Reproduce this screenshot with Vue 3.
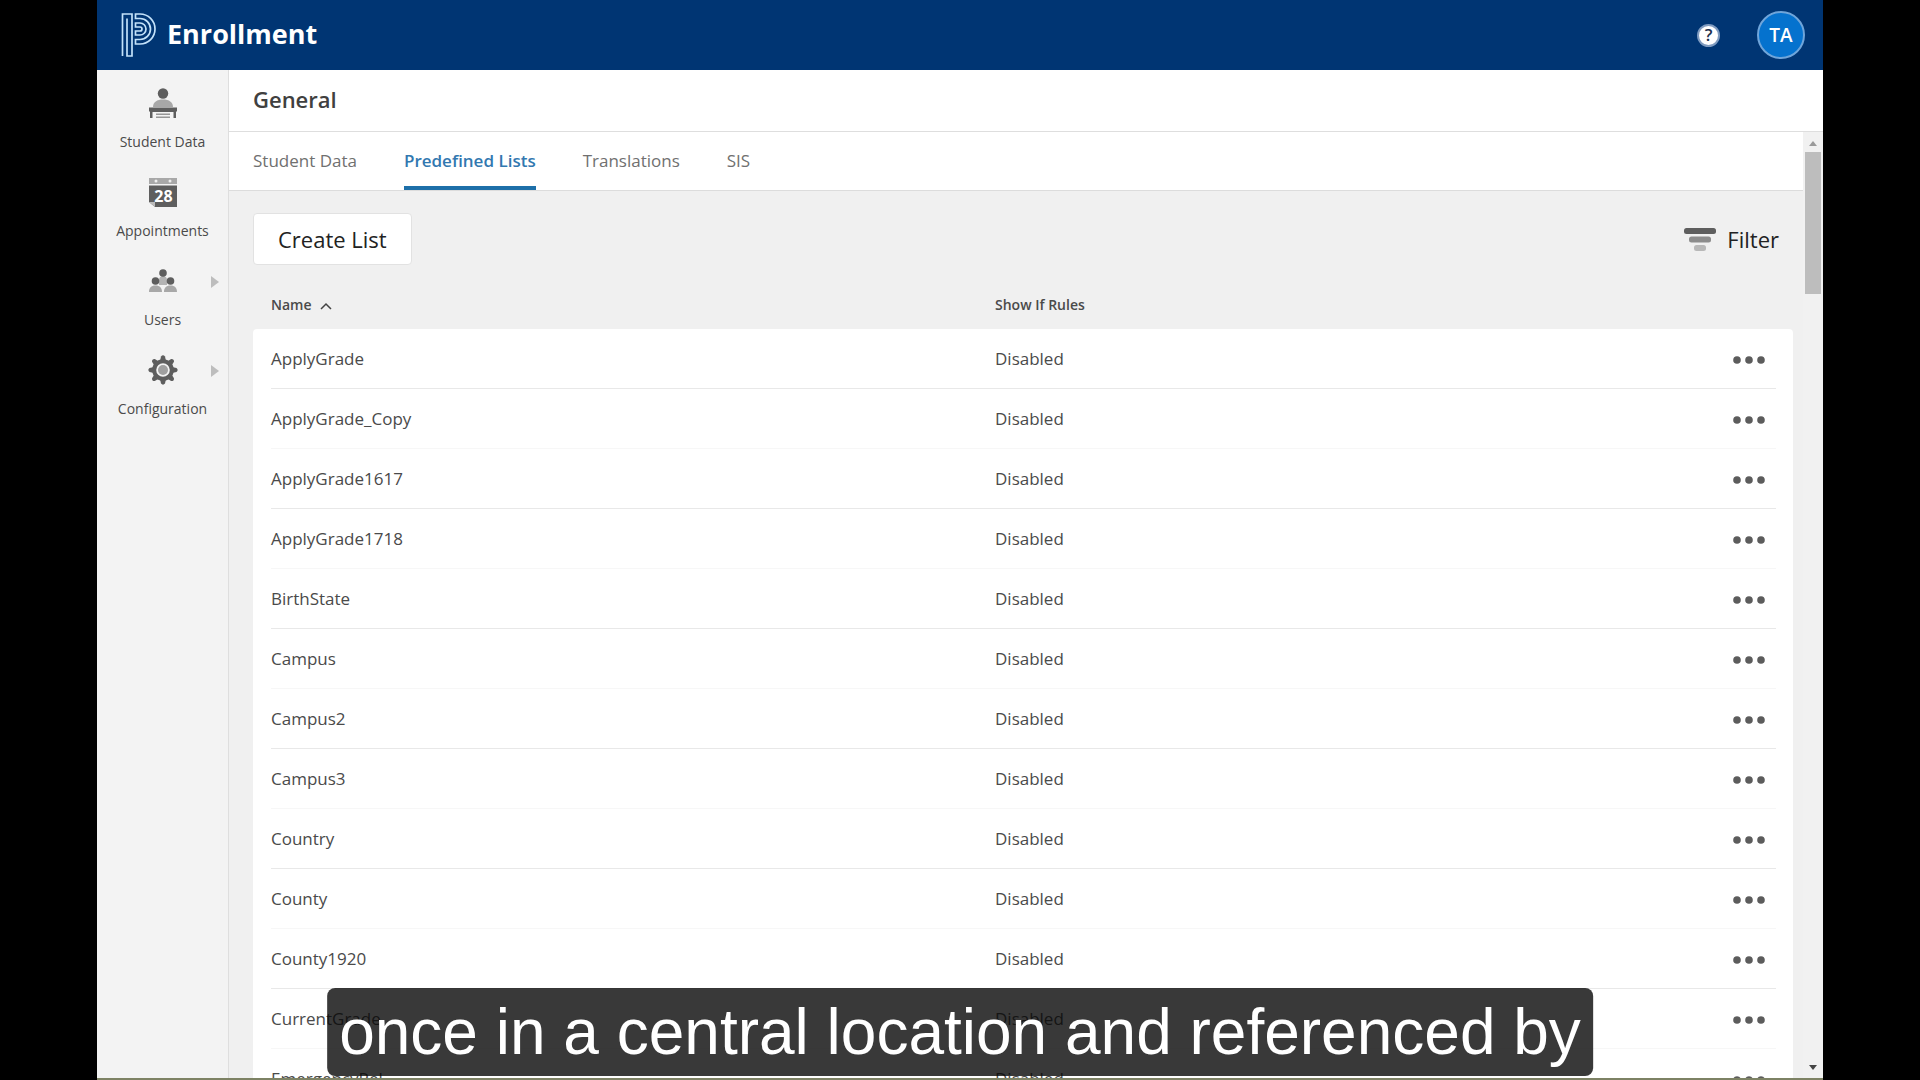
<template>
  <div class="stage">
    <div class="app">
      <header class="topbar">
        <a class="brand" href="#">
          <svg class="logo" viewBox="0 0 36 44" aria-hidden="true">
            <path d="M1.500 43V1H11V43H6V5.500" />
            <path d="M14.500 1H19a15 15 0 0 1 0 30h-4.500v-4.500H19a10.500 10.500 0 0 0 0-21h-4.500z" />
            <path d="M14.500 10H19a6 6 0 0 1 0 12h-4.500v-4H19a2 2 0 0 0 0-4h-4.500z" />
          </svg>
          <span>Enrollment</span>
        </a>
        <div class="topbar-right">
          <button class="help" aria-label="Help">?</button>
          <button class="avatar">TA</button>
        </div>
      </header>

      <div class="body">
        <nav class="sidebar">
          <a v-for="item in navItems" :key="item.label" class="nav-item" href="#">
            <svg v-if="item.icon === 'student'" class="nav-icon" viewBox="0 0 30 30" aria-hidden="true">
              <circle cx="15" cy="5.500" r="5.200" fill="#5e5e5e" />
              <path d="M5 19c0-5 4-7.500 10-7.500s10 2.500 10 7.500z" fill="#a8a8a8" />
              <path d="M1 19.500h28v4h-1V30h-2.500v-6h-21v6H2v-6.500H1z" fill="#5e5e5e" />
              <path d="M8 25.500h14V27H8zM8 28.500h14V30H8z" fill="#969696" />
            </svg>
            <svg v-else-if="item.icon === 'calendar'" class="nav-icon" viewBox="0 0 30 30" aria-hidden="true">
              <path d="M1 1h28v6H1z" fill="#a8a8a8" />
              <circle cx="8" cy="4" r="1.500" fill="#eee" />
              <circle cx="22" cy="4" r="1.500" fill="#eee" />
              <path d="M1 8.500h28V30H7l-6-5z" fill="#5e5e5e" />
              <path d="M1 25h6v5z" fill="#bcbcbc" />
              <text x="15.500" y="25" text-anchor="middle" class="cal-day">28</text>
            </svg>
            <svg v-else-if="item.icon === 'users'" class="nav-icon" viewBox="0 0 30 30" aria-hidden="true">
              <path d="M11 19v-5c0-3 2-4 4-4s4 1 4 4v5z" fill="#b4b4b4" />
              <circle cx="15" cy="7" r="3.800" fill="#5e5e5e" />
              <circle cx="7.500" cy="15" r="3.800" fill="#5e5e5e" />
              <circle cx="22.500" cy="15" r="3.800" fill="#5e5e5e" />
              <path d="M1 26c0-4 2-6.500 6.500-6.500S14 22 14 26zM16 26c0-4 2-6.500 6.500-6.500S29 22 29 26z" fill="#a8a8a8" />
            </svg>
            <svg v-else class="nav-icon" viewBox="0 0 30 30" aria-hidden="true">
              <path
                v-for="n in 8"
                :key="n"
                d="M12 6 13 1.500Q15-.8 17 1.500L18 6z"
                fill="#5e5e5e"
                :transform="`rotate(${n * 45} 15 15)`"
              />
              <circle cx="15" cy="15" r="8.800" fill="none" stroke="#5e5e5e" stroke-width="4" />
              <circle cx="15" cy="15" r="5" fill="#a0a0a0" />
            </svg>
            <span>{{ item.label }}</span>
            <svg v-if="item.children" class="nav-arrow" viewBox="0 0 8 12" aria-hidden="true">
              <path d="M0 0l8 6-8 6z" fill="#bdbdbd" />
            </svg>
          </a>
        </nav>

        <main class="main">
          <h1 class="page-title">General</h1>
          <div class="scroll-area">
            <div class="content">
              <nav class="tabs">
                <a v-for="tab in tabs" :key="tab" href="#" :class="['tab', { active: tab === activeTab }]" @click.prevent="activeTab = tab">{{ tab }}</a>
              </nav>

              <div class="toolbar">
                <button class="create-btn">Create List</button>
                <button class="filter-btn">
                  <svg class="filter-icon" viewBox="0 0 32 24" aria-hidden="true">
                    <rect x="0" y="1" width="32" height="6" rx="2.500" fill="#5e5e5e" />
                    <rect x="5" y="9.500" width="22" height="6" rx="2.500" fill="#8c8c8c" />
                    <rect x="10" y="18" width="12" height="6" rx="2.500" fill="#b8b8b8" />
                  </svg>
                  Filter
                </button>
              </div>

              <table class="list-table">
                <thead>
                  <tr>
                    <th class="col-name">
                      Name
                      <svg class="sort-icon" viewBox="0 0 12 8" aria-hidden="true">
                        <path d="M1 7l5-5 5 5" fill="none" stroke="#444" stroke-width="1.500" />
                      </svg>
                    </th>
                    <th>Show If Rules</th>
                    <th class="col-action"></th>
                  </tr>
                </thead>
                <tbody>
                  <tr v-for="name in lists" :key="name">
                    <td>{{ name }}</td>
                    <td>Disabled</td>
                    <td class="col-action">
                      <button class="more-btn" :aria-label="`Actions for ${name}`">
                        <svg viewBox="0 0 32 8" aria-hidden="true">
                          <circle cx="4" cy="4" r="3.800" />
                          <circle cx="16" cy="4" r="3.800" />
                          <circle cx="28" cy="4" r="3.800" />
                        </svg>
                      </button>
                    </td>
                  </tr>
                </tbody>
              </table>
            </div>

            <div class="scrollbar">
              <svg class="scroll-arrow" viewBox="0 0 8 5" aria-hidden="true"><path d="M0 5l4-5 4 5z" fill="#9a9a9a" /></svg>
              <div class="scroll-track"><div class="scroll-thumb"></div></div>
              <svg class="scroll-arrow" viewBox="0 0 8 5" aria-hidden="true"><path d="M0 0h8l-4 5z" fill="#444" /></svg>
            </div>
          </div>
        </main>
      </div>
    </div>
    <p class="caption">once in a central location and referenced by</p>
  </div>
</template>

<script setup>
import { ref } from 'vue';

const navItems = [
  { label: 'Student Data', icon: 'student' },
  { label: 'Appointments', icon: 'calendar' },
  { label: 'Users', icon: 'users', children: true },
  { label: 'Configuration', icon: 'gear', children: true }
];

const tabs = ['Student Data', 'Predefined Lists', 'Translations', 'SIS'];
const activeTab = ref('Predefined Lists');

const lists = [
  'ApplyGrade',
  'ApplyGrade_Copy',
  'ApplyGrade1617',
  'ApplyGrade1718',
  'BirthState',
  'Campus',
  'Campus2',
  'Campus3',
  'Country',
  'County',
  'County1920',
  'CurrentGrade',
  'EmergencyRel'
];
</script>

<style>
body {
  margin: 0;
  background: #000;
}
</style>

<style scoped>
.stage {
  position: relative;
  height: 100vh;
  box-sizing: border-box;
  padding: 0 97px;
  background: #000;
  overflow: hidden;
  font-family: "Open Sans", "Noto Sans", sans-serif;
  color: #4a4a4a;
}

.app {
  display: flex;
  flex-direction: column;
  height: 100%;
  box-sizing: border-box;
  border-bottom: 2px solid #7d8264;
  background: #f0f0f0;
}

button {
  border: none;
  padding: 0;
  font-family: inherit;
  cursor: pointer;
}

a {
  color: inherit;
  text-decoration: none;
}

/* 顶部栏 */
.topbar {
  display: flex;
  flex: none;
  justify-content: space-between;
  align-items: center;
  height: 70px;
  box-sizing: border-box;
  padding: 0 18px 0 24px;
  background: #003573;
  color: #fff;
}

.brand {
  display: flex;
  align-items: center;
  gap: 10px;
  font-size: 27px;
  line-height: 36px;
  font-weight: 700;
}

.brand span {
  padding-bottom: 2px;
}

.logo {
  width: 36px;
  height: 44px;
  fill: none;
  stroke: #c3e2fa;
  stroke-width: 1.7;
}

.topbar-right {
  display: flex;
  align-items: center;
  gap: 37px;
}

.help {
  width: 23px;
  height: 23px;
  border: 2px solid #7f9bc0;
  border-radius: 50%;
  background: #fff;
  color: #1c2f4d;
  font-size: 17px;
  line-height: 18px;
  font-weight: 600;
}

.avatar {
  width: 48px;
  height: 48px;
  border: 2px solid #6fa5da;
  border-radius: 50%;
  background: #0572ce;
  color: #fff;
  font-size: 19px;
  line-height: 42px;
  font-weight: 600;
}

.body {
  display: flex;
  flex: 1;
  min-height: 0;
}

/* 侧边栏 */
.sidebar {
  flex: none;
  width: 132px;
  box-sizing: border-box;
  padding-top: 18px;
  border-right: 1px solid #dedede;
  background: #f3f3f3;
}

.nav-item {
  position: relative;
  display: flex;
  flex-direction: column;
  align-items: center;
  gap: 14px;
  height: 89px;
  font-size: 14px;
  line-height: 20px;
}

.nav-icon {
  width: 30px;
  height: 30px;
}

.cal-day {
  font-size: 16px;
  font-weight: 700;
  fill: #fff;
}

.nav-arrow {
  position: absolute;
  right: 9px;
  top: 10px;
  width: 8px;
  height: 12px;
}

/* 主区域 */
.main {
  display: flex;
  flex: 1;
  flex-direction: column;
  min-width: 0;
}

.page-title {
  flex: none;
  height: 62px;
  box-sizing: border-box;
  margin: 0;
  padding-left: 24px;
  border-bottom: 1px solid #dedede;
  background: #fff;
  color: #404040;
  font-size: 22px;
  line-height: 58px;
  font-weight: 600;
}

.scroll-area {
  display: flex;
  flex: 1;
  min-height: 0;
}

.content {
  flex: 1;
  min-width: 0;
  overflow: hidden;
}

.tabs {
  display: flex;
  gap: 47px;
  height: 59px;
  box-sizing: border-box;
  padding-left: 24px;
  border-bottom: 1px solid #dcdcdc;
  background: #fff;
  color: #707070;
  font-size: 17px;
  line-height: 58px;
}

.tab.active {
  box-shadow: inset 0 -4px #1d6fa9;
  color: #3278b0;
  font-weight: 600;
}

.toolbar {
  display: flex;
  justify-content: space-between;
  align-items: center;
  padding: 22px 24px 0 24px;
}

.create-btn {
  height: 52px;
  padding: 0 24px;
  border: 1px solid #e2e2e2;
  border-radius: 4px;
  background: #fff;
  color: #222;
  font-size: 22px;
  line-height: 48px;
}

.filter-btn {
  display: flex;
  align-items: center;
  gap: 11px;
  background: none;
  color: #222;
  font-size: 22px;
}

.filter-icon {
  width: 32px;
  height: 24px;
}

/* 列表 */
.list-table {
  width: calc(100% - 34px);
  margin: 0 10px 0 24px;
  border-collapse: separate;
  border-spacing: 0;
  table-layout: fixed;
  font-size: 17px;
}

th {
  height: 64px;
  padding: 14px 0 0;
  box-sizing: border-box;
  font-size: 14px;
  font-weight: 600;
  text-align: left;
}

.col-name {
  box-sizing: border-box;
  width: 742px;
}

.sort-icon {
  width: 12px;
  height: 8px;
  margin-left: 5px;
}

td {
  height: 60px;
  padding: 0 0 2px;
  box-sizing: border-box;
  background: #fff linear-gradient(#f7f7f7, #f7f7f7) no-repeat right bottom / 100% 1px;
}

tbody tr:nth-child(odd) td {
  background-image: linear-gradient(#e8e8e8, #e8e8e8);
}

th:first-child,
td:first-child {
  padding-left: 18px;
}

td:first-child {
  background-size: calc(100% - 18px) 1px;
}

td:last-child {
  background-position: left bottom;
  background-size: calc(100% - 17px) 1px;
}

tbody tr:first-child td:first-child {
  border-top-left-radius: 4px;
}

tbody tr:first-child td:last-child {
  border-top-right-radius: 4px;
}

.col-action {
  width: 100px;
  padding-right: 28px;
  text-align: right;
}

.more-btn {
  background: none;
  vertical-align: middle;
}

.more-btn svg {
  display: block;
  width: 32px;
  height: 8px;
  fill: #5c5c5c;
}

/* 滚动条 */
.scrollbar {
  display: flex;
  flex: none;
  flex-direction: column;
  align-items: center;
  width: 20px;
  box-sizing: border-box;
  padding: 9px 0 8px;
  background: #f1f1f1;
}

.scroll-arrow {
  width: 8px;
  height: 5px;
}

.scroll-track {
  flex: 1;
  width: 16px;
  padding: 6px 0;
}

.scroll-thumb {
  height: 142px;
  background: #bdbdbd;
}

/* 字幕 */
.caption {
  position: absolute;
  left: 50%;
  bottom: 4px;
  transform: translateX(-50%);
  margin: 0;
  padding: 0 12px;
  border-radius: 8px;
  background: rgba(8, 8, 8, 0.8);
  color: #fff;
  font-family: "Liberation Sans", Arial, sans-serif;
  font-size: 64px;
  line-height: 88px;
  white-space: nowrap;
}
</style>
